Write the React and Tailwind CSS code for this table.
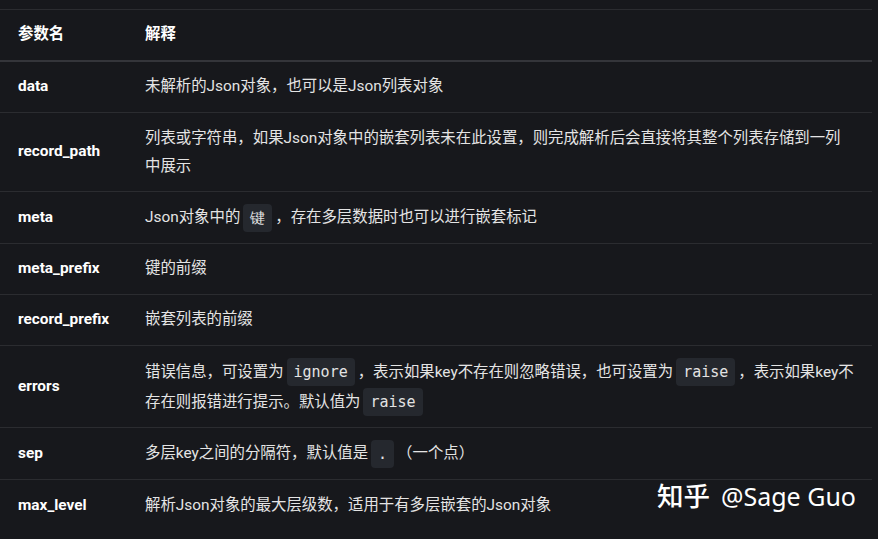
const Code = ({ children }) => (
  <span className="inline-block mx-[3px] px-[7px] rounded-[4px] bg-[#25282e] text-[#e3e3e3] leading-[28px] text-[15px] [font-family:'DejaVu_Sans_Mono','Liberation_Mono',monospace] align-middle">
    {children}
  </span>
);

const rows = [
  { k: "data", h: "h-[51px]", v: <>未解析的Json对象，也可以是Json列表对象</> },
  {
    k: "record_path",
    h: "h-[79px]",
    v: (
      <div className="leading-[28px]">
        列表或字符串，如果Json对象中的嵌套列表未在此设置，则完成解析后会直接将其整个列表存储到一列
        <br />
        中展示
      </div>
    ),
  },
  { k: "meta", h: "h-[52px]", v: <>Json对象中的<Code>键</Code>，存在多层数据时也可以进行嵌套标记</> },
  { k: "meta_prefix", h: "h-[51px]", v: <>键的前缀</> },
  { k: "record_prefix", h: "h-[51px]", v: <>嵌套列表的前缀</> },
  {
    k: "errors",
    h: "h-[82px]",
    v: (
      <div className="leading-[30px]">
        错误信息，可设置为<Code>ignore</Code>，表示如果key不存在则忽略错误，也可设置为<Code>raise</Code>，表示如果key不
        <br />
        存在则报错进行提示。默认值为<Code>raise</Code>
      </div>
    ),
  },
  { k: "sep", h: "h-[52px]", v: <>多层key之间的分隔符，默认值是<Code>.</Code>（一个点）</> },
  { k: "max_level", h: "h-[52px]", v: <>解析Json对象的最大层级数，适用于有多层嵌套的Json对象</>, last: true },
];

export default function App() {
  return (
    <div className="relative w-[878px] h-[539px] overflow-hidden bg-[#17181c] text-[15.4px] text-[#e4e4e4] [font-family:Roboto,'Noto_Sans_CJK_SC',sans-serif]">
      <div className="pt-[9px] w-[872px]">
        <div className="border-t border-[#2b2c30]" />
        <div className="flex items-center h-[52px] border-b-2 border-[#34353a] font-bold text-white">
          <div className="w-[145px] pl-[18px] shrink-0">参数名</div>
          <div>解释</div>
        </div>
        {rows.map((r) => (
          <div
            key={r.k}
            className={`flex items-center ${r.h} ${r.last ? "" : "border-b border-[#2b2c30]"}`}
          >
            <div className="w-[145px] pl-[18px] shrink-0 font-bold text-white">{r.k}</div>
            <div className="whitespace-nowrap">{r.v}</div>
          </div>
        ))}
      </div>
      <div className="absolute left-[657px] top-[477px] flex items-baseline gap-[11px] text-white [font-family:'Noto_Sans','Noto_Sans_CJK_SC',sans-serif] whitespace-nowrap">
        <span className="font-medium text-[26.5px]">知乎</span>
        <span className="text-[25px]">@Sage Guo</span>
      </div>
    </div>
  );
}
